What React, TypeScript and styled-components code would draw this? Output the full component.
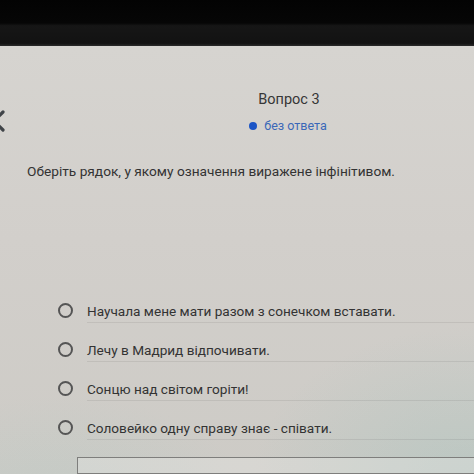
import React from 'react';
import styled, { createGlobalStyle } from 'styled-components';

const GlobalStyle = createGlobalStyle`
  html, body {
    margin: 0;
    padding: 0;
    background: #000;
    overflow: hidden;
  }
  * {
    box-sizing: border-box;
  }
`;

const options = [
  'Научала мене мати разом з сонечком вставати.',
  'Лечу в Мадрид відпочивати.',
  'Сонцю над світом горіти!',
  'Соловейко одну справу знає - співати.',
];

const Page = styled.div`
  width: 474px;
  height: 474px;
  display: flex;
  flex-direction: column;
  font-family: Roboto, "Noto Sans", sans-serif;
`;

const Bezel = styled.div`
  height: 46px;
  flex-shrink: 0;
  background: linear-gradient(180deg, #030303 0%, #060606 50%, #161616 56%, #121212 94%, #2a2a2a 100%);
`;

const Screen = styled.div`
  flex: 1;
  display: flex;
  flex-direction: column;
  overflow: hidden;
  background:
    radial-gradient(ellipse 220px 160px at 470px 440px, rgba(150, 190, 185, 0.35), transparent),
    radial-gradient(ellipse 200px 120px at 60px 470px, rgba(170, 200, 195, 0.3), transparent),
    linear-gradient(180deg, #d6d4d0 0%, #d2cfcb 45%, #cdcbc6 100%);
`;

const HeaderRow = styled.div`
  display: flex;
  align-items: flex-start;
  padding-top: 44px;
`;

const Chevron = styled.svg`
  width: 14px;
  height: 22px;
  margin-left: -9px;
  margin-top: 20px;
  flex-shrink: 0;
`;

const Header = styled.div`
  flex: 1;
  display: flex;
  flex-direction: column;
  align-items: center;
  padding-left: 99px;
`;

const Title = styled.div`
  font-size: 14.5px;
  line-height: 20px;
  color: #363636;
`;

const Status = styled.div`
  display: flex;
  align-items: center;
  gap: 7px;
  margin-top: 8px;
  margin-left: -2px;
  font-size: 12.5px;
  line-height: 16px;
  color: #3a68b8;
`;

const Dot = styled.span`
  width: 8px;
  height: 8px;
  border-radius: 50%;
  background: #1c55c6;
`;

const Question = styled.div`
  margin: 28px 0 0 27px;
  font-size: 13.7px;
  line-height: 18px;
  color: #333;
`;

const OptionList = styled.div`
  display: flex;
  flex-direction: column;
  margin-top: 104px;
  padding-left: 58px;
`;

const OptionRow = styled.label`
  display: flex;
  align-items: flex-end;
  height: 39px;
`;

const Radio = styled.span`
  width: 15px;
  height: 15px;
  border: 2px solid #555;
  border-radius: 50%;
  flex-shrink: 0;
  margin-bottom: 5px;
`;

const OptionText = styled.span`
  flex: 1;
  margin-left: 14px;
  height: 24px;
  display: flex;
  align-items: center;
  font-size: 13.6px;
  color: #333;
  border-bottom: 1px solid rgba(0, 0, 0, 0.07);
`;

const AnswerBox = styled.div`
  margin: 17px -10px 0 77px;
  height: 40px;
  border: 1px solid #7e7e7c;
  background: rgba(235, 235, 232, 0.35);
`;

export default function App() {
  return (
    <>
      <GlobalStyle />
      <Page>
        <Bezel />
        <Screen>
          <HeaderRow>
            <Chevron viewBox="0 0 14 22">
              <path d="M12 2 L3 11 L12 20" fill="none" stroke="#404448" strokeWidth="3.2" strokeLinecap="round" />
            </Chevron>
            <Header>
              <Title>Вопрос 3</Title>
              <Status>
                <Dot />
                без ответа
              </Status>
            </Header>
          </HeaderRow>
          <Question>Оберіть рядок, у якому означення виражене інфінітивом.</Question>
          <OptionList>
            {options.map((text) => (
              <OptionRow key={text}>
                <Radio />
                <OptionText>{text}</OptionText>
              </OptionRow>
            ))}
          </OptionList>
          <AnswerBox />
        </Screen>
      </Page>
    </>
  );
}
